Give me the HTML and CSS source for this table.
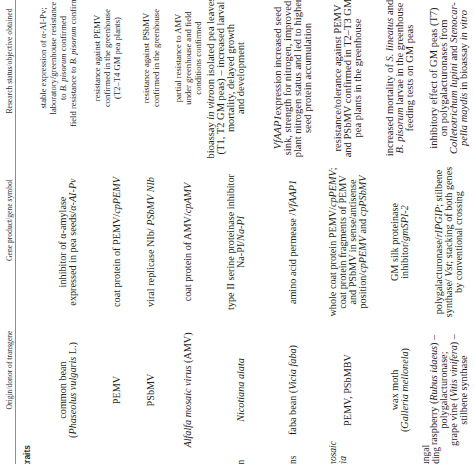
FILE: index.html
```html
<!DOCTYPE html>
<html lang="en">
<head>
<meta charset="utf-8">
<title>Transgenic pea traits</title>
<link rel="stylesheet" href="styles.css">
</head>
<body>
<div class="page">
  <div class="clip">
    <div class="table">
      <div class="row row--head">
        <div class="cell cell--trait"></div>
        <div class="cell th th--origin">Origin/donor of transgene</div>
        <div class="cell th th--gene">Gene product/gene symbol</div>
        <div class="cell th th--research">Research status/objective obtained</div>
      </div>

      <div class="section">Resistance traits</div>

      <div class="row row--end gap-1">
        <div class="cell cell--trait"></div>
        <div class="cell">common bean<br>(<i>Phaseolus vulgaris</i> L.)</div>
        <div class="cell">inhibitor of α-amylase<br>expressed in pea seeds/<i>α-AI-Pv</i></div>
        <div class="cell cell--research research--near">stable expression of α-AI-Pv;<br>laboratory/greenhouse resistance<br>to <i>B. pisorum</i> confirmed<br>field resistance to <i>B. pisorum</i> confirmed</div>
      </div>

      <div class="row row--end gap-2">
        <div class="cell cell--trait"></div>
        <div class="cell">PEMV</div>
        <div class="cell">coat protein of PEMV/<i>cpPEMV</i></div>
        <div class="cell cell--research research--near">resistance against PEMV<br>confirmed in the greenhouse<br>(T2–T4 GM pea plants)</div>
      </div>

      <div class="row gap-3">
        <div class="cell cell--trait"></div>
        <div class="cell">PSbMV</div>
        <div class="cell">viral replicase NIb/ <i>PSbMV NIb</i></div>
        <div class="cell cell--research research--near">resistance against PSbMV<br>confirmed in the greenhouse</div>
      </div>

      <div class="row gap-4">
        <div class="cell cell--trait"></div>
        <div class="cell"><i>Alfalfa mosaic virus</i> (AMV)</div>
        <div class="cell">coat protein of AMV/<i>cpAMV</i></div>
        <div class="cell cell--research research--near">partial resistance to AMV<br>under greenhouse and field<br>conditions confirmed</div>
      </div>

      <div class="row row--end gap-5">
        <div class="cell cell--trait">pest protection</div>
        <div class="cell"><i>Nicotiana alata</i></div>
        <div class="cell">type II serine proteinase inhibitor<br>Na-PI/<i>Na-PI</i></div>
        <div class="cell cell--research research--far">bioassay <i>in vitro</i>on isolated pea leaves<br>(T1, T2 GM peas) – increased larval<br>mortality, delayed growth<br>and development</div>
      </div>

      <div class="row gap-6">
        <div class="cell cell--trait">storage proteins</div>
        <div class="cell">faba bean (<i>Vicia faba</i>)</div>
        <div class="cell">amino acid permease /<i>VfAAP1</i></div>
        <div class="cell cell--research research--far"><i>VfAAP1</i>expression increased seed<br>sink, strength for nitrogen, improved<br>plant nitrogen status and led to higher<br>seed protein accumulation</div>
      </div>

      <div class="row gap-7">
        <div class="cell cell--trait cell--top"><i>Pea enation mosaic</i><br><i>Enamovirus via</i></div>
        <div class="cell">PEMV, PSbMBV</div>
        <div class="cell">whole coat protein PEMV/<i>cpPEMV</i>;<br>coat protein fragments of PEMV<br>and PSbMV in sense/antisense<br>position/<i>cpPEMV</i> and <i>cpPSbMV</i></div>
        <div class="cell cell--research research--far">resistance/tolerance against PEMV<br>and PSbMV confirmed in T2–T3 GM<br>pea plants in the greenhouse</div>
      </div>

      <div class="row gap-8">
        <div class="cell cell--trait"></div>
        <div class="cell">wax moth<br>(<i>Galleria mellonela</i>)</div>
        <div class="cell">GM silk proteinase<br>inhibitor/<i>gmSPI-2</i></div>
        <div class="cell cell--research research--far">increased mortality of <i>S. lineatus</i> and<br><i>B. pisorum</i> larvae in the greenhouse<br>feeding tests on GM peas</div>
      </div>

      <div class="row gap-9">
        <div class="cell cell--trait cell--raised">tolerance to fungal<br>and insect feeding</div>
        <div class="cell">raspberry (<i>Rubus idaeus</i>) –<br>polygalacturonase;<br>grape vine (<i>Vitis vinifera</i>) –<br>stilbene synthase</div>
        <div class="cell">polygalacturonase/<i>rIPGIP</i>; stilbene<br>synthase/ <i>Vst</i>; stacking of both genes<br>by conventional crossing</div>
        <div class="cell cell--research research--far">inhibitory effect of GM peas (T7)<br>on polygalacturonases from<br><i>Colletotrichum lupini</i> and <i>Stenocar-</i><br><i>pella maydis</i> in bioassay <i>in vitro</i></div>
      </div>
    </div>
  </div>
</div>
</body>
</html>
```

FILE: styles.css
```css
html, body {
  margin: 0;
  padding: 0;
  background: #ffffff;
}

body {
  width: 474px;
  height: 474px;
  overflow: hidden;
}

.page {
  width: 474px;
  height: 474px;
  transform: rotate(-90deg);
  transform-origin: 237px 237px;
  font-family: "Liberation Serif", "Times New Roman", serif;
  font-size: 10.2px;
  line-height: 10px;
  color: #1f1f1f;
}

.clip {
  margin-left: 10px;
  width: 464px;
  height: 474px;
  overflow: hidden;
}

.table {
  margin-left: -56px;
  width: 550px;
}

.row {
  display: grid;
  grid-template-columns: 62px 136px 160px 192px;
  align-items: center;
}

.cell {
  white-space: nowrap;
  text-align: center;
}

.cell--trait {
  text-align: left;
  padding-left: 4px;
  font-size: 9.5px;
}

.cell--top {
  align-self: start;
}

.cell--raised {
  align-self: start;
  margin-top: -8px;
}

.row--end .cell {
  align-self: end;
}

.row--end .cell--research {
  align-self: center;
}

.research--near {
  font-size: 8.6px;
  padding-left: 16px;
}

.research--far {
  font-size: 10.5px;
  padding-right: 24px;
}

.row--head {
  padding-top: 5px;
  border-bottom: 1.5px solid #8e8e8e;
  color: #2e2e2e;
}

.th {
  font-size: 7.6px;
}

.th--origin {
  padding-left: 40px;
}

.th--gene {
  padding-left: 44px;
}

.th--research {
  padding-left: 10px;
}

.section {
  margin-top: 5.5px;
  padding-left: 7px;
  font-family: "Liberation Sans", Arial, sans-serif;
  font-weight: bold;
  font-size: 8.5px;
  line-height: 10px;
  color: #2e2e2e;
}

.gap-1 { margin-top: 6px; }
.gap-2 { margin-top: 14px; }
.gap-3 { margin-top: 19px; }
.gap-4 { margin-top: 12px; }
.gap-5 { margin-top: 3px; }
.gap-6 { margin-top: 27px; }
.gap-7 { margin-top: 15px; }
.gap-8 { margin-top: 17px; }
.gap-9 { margin-top: 14px; }
```
